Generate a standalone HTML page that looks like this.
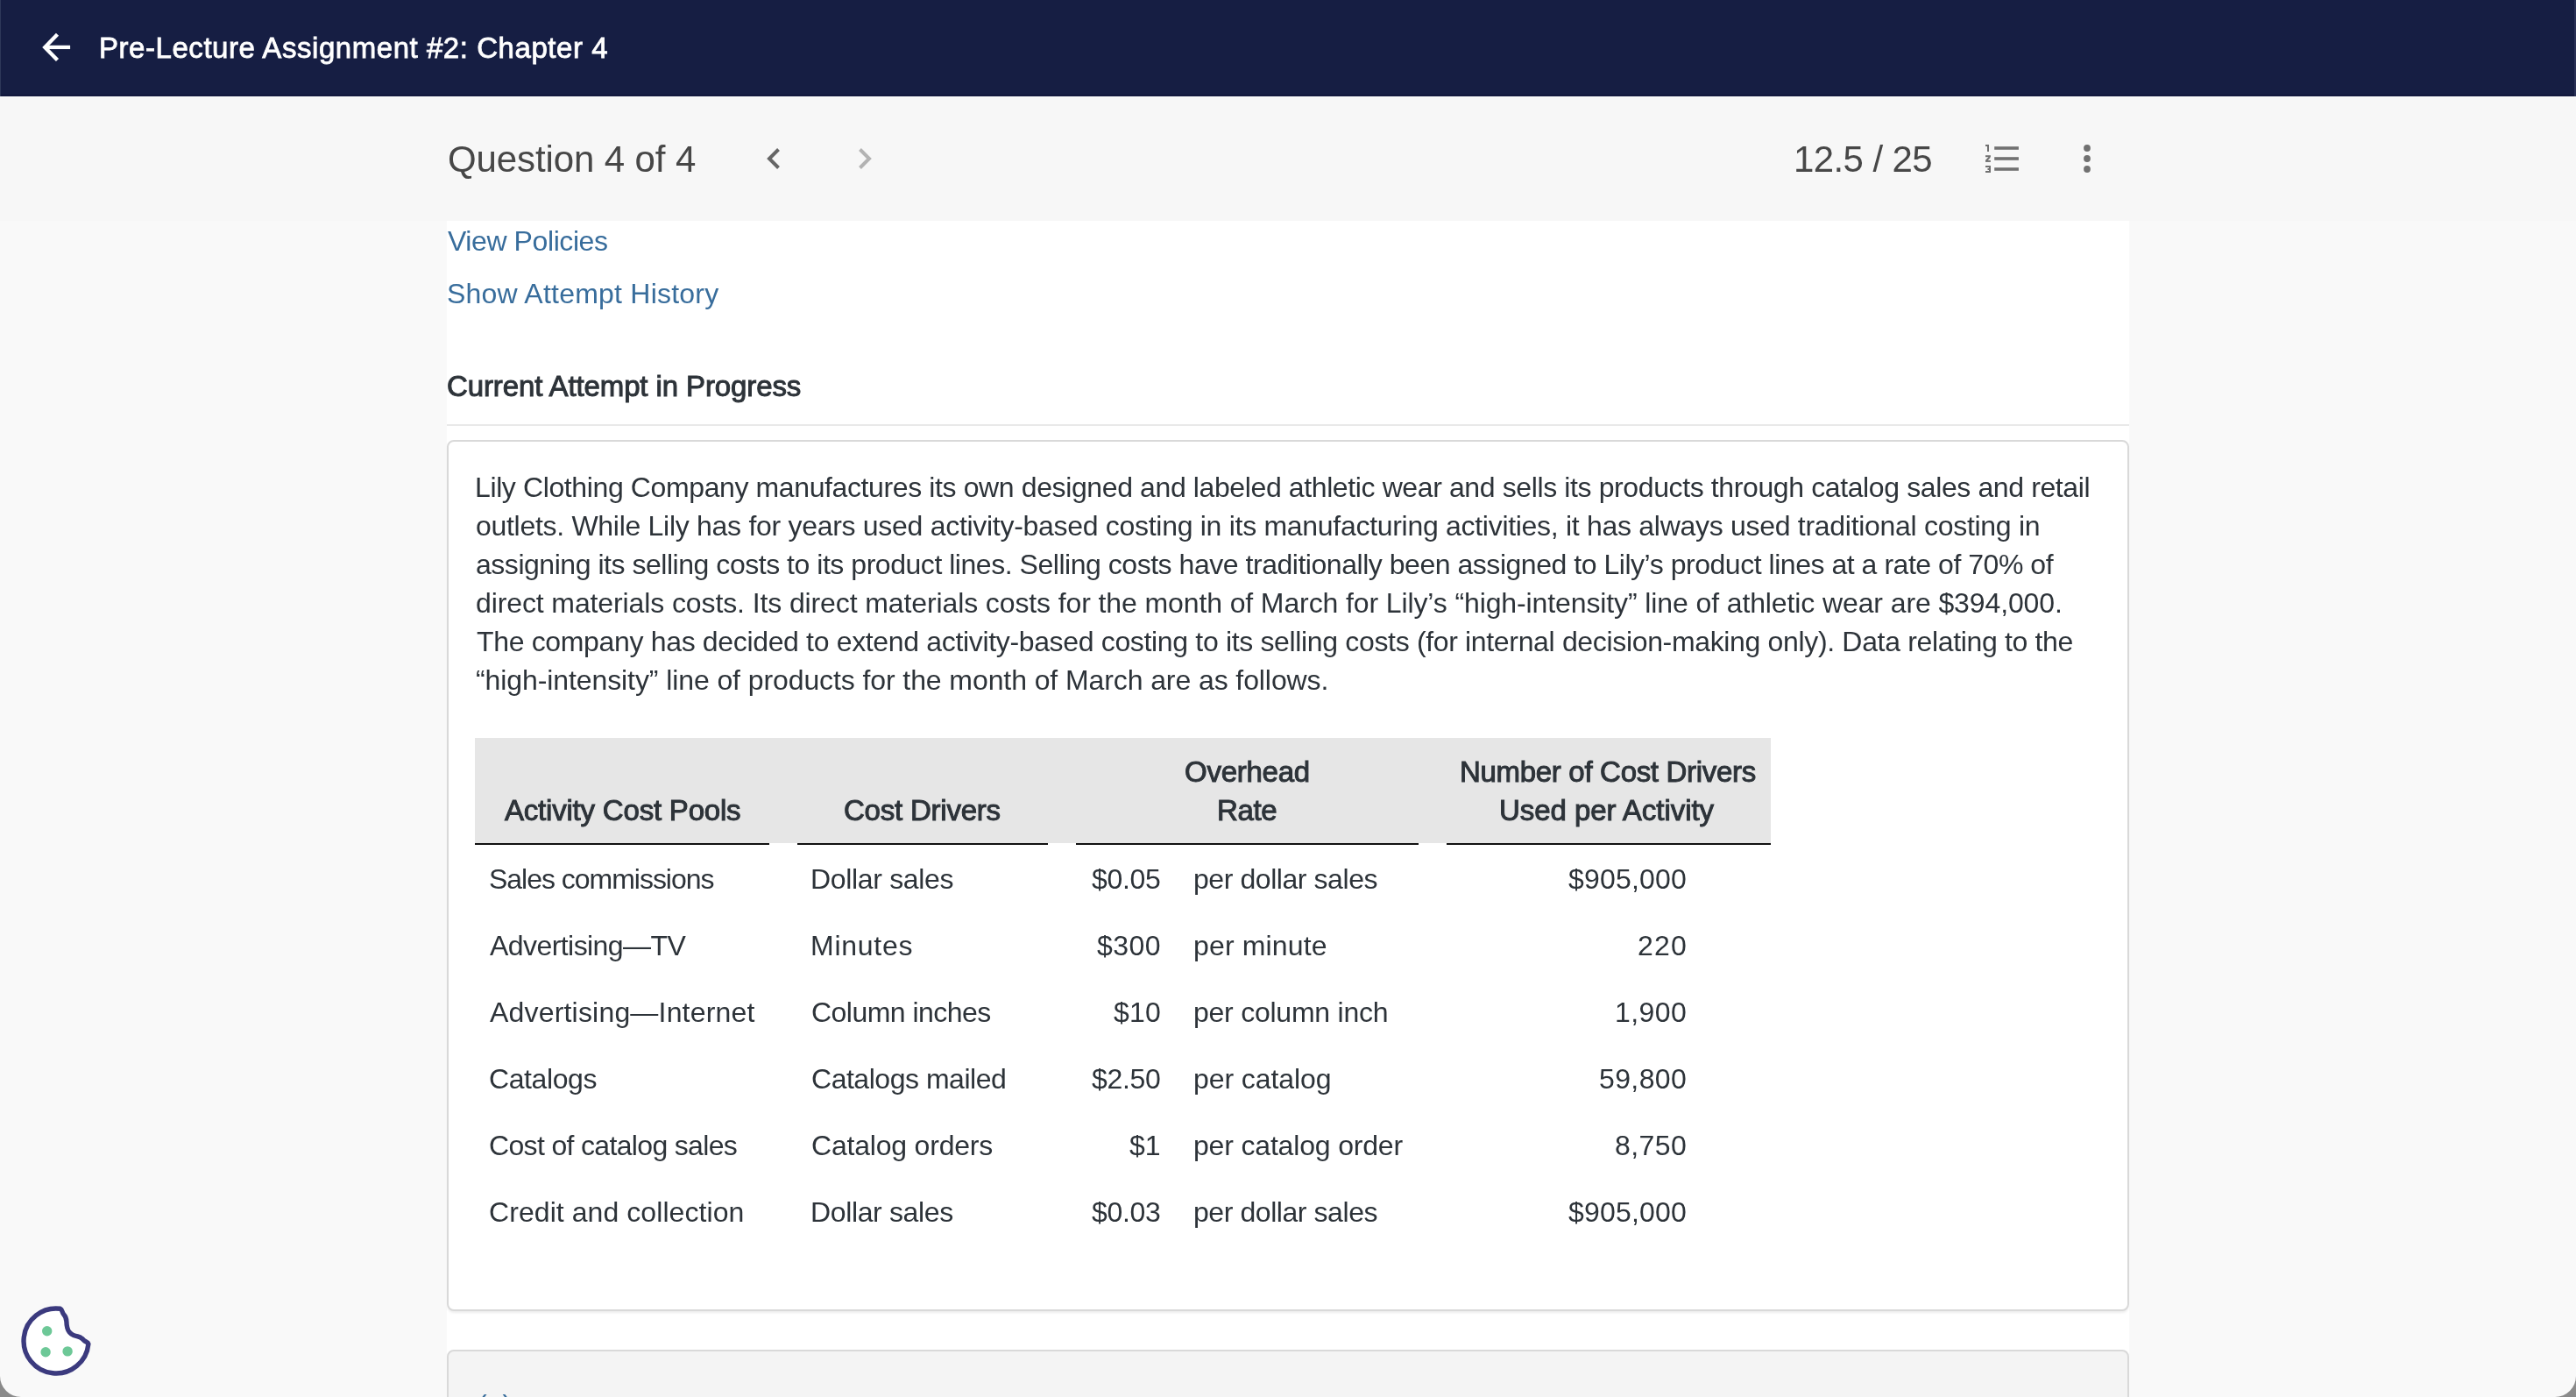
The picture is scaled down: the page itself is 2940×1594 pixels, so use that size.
<!DOCTYPE html>
<html><head><meta charset="utf-8"><title>Pre-Lecture Assignment #2: Chapter 4</title>
<style>
html,body{margin:0;padding:0;width:2940px;height:1594px;overflow:hidden;background:#f9f9f9;font-family:"Liberation Sans",sans-serif;position:relative}
.t{position:absolute;white-space:nowrap;line-height:1;will-change:transform}
.a{position:absolute}
</style></head><body>
<!-- top app bar -->
<div class="a" style="left:0;top:0;width:2940px;height:110px;background:#161e43"></div>
<div class="a" style="left:0;top:110px;width:2940px;height:142px;background:#f7f7f7"></div>
<div class="a" style="left:0;top:108px;width:2940px;height:1px;background:#10143a"></div>
<div class="a" style="left:0;top:110px;width:2940px;height:1px;background:#ffffff"></div>
<div class="a" style="left:0;top:0;width:1px;height:110px;background:#2e3858"></div>
<div class="a" style="left:2938px;top:0;width:2px;height:110px;background:#2a3156"></div>
<!-- white content column -->
<div class="a" style="left:510px;top:252px;width:1920px;height:1342px;background:#ffffff"></div>
<!-- hr -->
<div class="a" style="left:510px;top:484px;width:1920px;height:2px;background:#e9e9e9"></div>
<!-- question box -->
<div class="a" style="left:510px;top:502px;width:1920px;height:994px;box-sizing:border-box;border:2px solid #d9d9d9;border-radius:8px;background:#fff;box-shadow:0 3px 3px -1px rgba(0,0,0,0.08)"></div>
<!-- table header background -->
<div class="a" style="left:542px;top:842px;width:1479px;height:120px;background:#e6e6e6"></div>
<div class="a" style="left:542px;top:962px;width:336px;height:2px;background:#111"></div>
<div class="a" style="left:910px;top:962px;width:286px;height:2px;background:#111"></div>
<div class="a" style="left:1228px;top:962px;width:391px;height:2px;background:#111"></div>
<div class="a" style="left:1651px;top:962px;width:370px;height:2px;background:#111"></div>
<!-- bottom panel -->
<div class="a" style="left:510px;top:1540px;width:1920px;height:80px;box-sizing:border-box;border:2px solid #d9d9d9;border-radius:8px;background:#f4f4f4"></div>

<!-- icons -->
<svg class="a" style="left:0;top:0" width="2940" height="1594" viewBox="0 0 2940 1594">
  <!-- back arrow -->
  <path d="M65.5 39.3 L51.2 53.9 L65.5 68.6" fill="none" stroke="#fff" stroke-width="4.3" stroke-linejoin="miter"/>
  <path d="M51 53.9 H80.1" fill="none" stroke="#fff" stroke-width="4.3"/>
  <!-- chevrons -->
  <path d="M888.5 170.5 L878 181 L888.5 191.5" fill="none" stroke="#666" stroke-width="4"/>
  <path d="M981.5 170.5 L992 181 L981.5 191.5" fill="none" stroke="#b3b3b3" stroke-width="4"/>
  <!-- list icon -->
  <g fill="#717171">
    <rect x="2276.2" y="167.2" width="27.7" height="3.6"/>
    <rect x="2276.2" y="179.2" width="27.7" height="3.6"/>
    <rect x="2276.2" y="191.2" width="27.7" height="3.6"/>
    <rect x="2266" y="165" width="4" height="2"/>
    <rect x="2268" y="165" width="2" height="8"/>
    <rect x="2266" y="177.2" width="5.9" height="2"/>
    <rect x="2266" y="182.9" width="5.9" height="2"/>
    <rect x="2266" y="189" width="5.9" height="2"/>
    <rect x="2268.5" y="192" width="3.4" height="2"/>
    <rect x="2266" y="195" width="5.9" height="2"/>
    <rect x="2270" y="189" width="2" height="8"/>
  </g>
  <path d="M2271 179 L2266.8 183.5" stroke="#717171" stroke-width="2" fill="none"/>
  <!-- kebab -->
  <g fill="#717171">
    <circle cx="2382" cy="169" r="3.9"/>
    <circle cx="2382" cy="181" r="3.9"/>
    <circle cx="2382" cy="193" r="3.9"/>
  </g>
  <!-- cookie -->
  <path d="M68.7 1493.3 C71.5 1494.5 70.5 1497.5 72.8 1499.8 C75 1502 75.8 1503.5 75.9 1508 C76 1512.5 76.2 1516.5 79.2 1520 C82 1523.3 85 1524.5 89 1525 C93 1525.5 94 1528 96.5 1530 C98.3 1531.3 100.3 1531.3 100.9 1533.5 A37 37 0 1 1 68.7 1493.3 Z" fill="#fff" stroke="#3b3a7e" stroke-width="5.4" stroke-linejoin="round"/>
  <g fill="#6dc897">
    <circle cx="53.7" cy="1518.7" r="5.7"/>
    <circle cx="52.1" cy="1542.8" r="5.7"/>
    <circle cx="77.1" cy="1541.9" r="5.7"/>
  </g>
</svg>

<div class="t" style="left:112.5px;top:38.1px;font-size:33px;letter-spacing:0.549px;color:#ffffff;-webkit-text-stroke:0.8px #ffffff">Pre-Lecture Assignment #2: Chapter 4</div>
<div class="t" style="left:511.0px;top:161.4px;font-size:42px;letter-spacing:-0.107px;color:#474747">Question 4 of 4</div>
<div class="t" style="left:2046.5px;top:161.4px;font-size:42px;letter-spacing:-0.601px;color:#474747">12.5 / 25</div>
<div class="t" style="left:511.0px;top:258.9px;font-size:32px;letter-spacing:-0.411px;color:#386d9c">View Policies</div>
<div class="t" style="left:510.0px;top:318.9px;font-size:32px;letter-spacing:0.229px;color:#386d9c">Show Attempt History</div>
<div class="t" style="left:510.0px;top:424.1px;font-size:33px;letter-spacing:-0.111px;color:#2d3339;-webkit-text-stroke:1.0px #2d3339">Current Attempt in Progress</div>
<div class="t" style="left:542.0px;top:539.9px;font-size:32px;letter-spacing:-0.385px;color:#2d3339">Lily Clothing Company manufactures its own designed and labeled athletic wear and sells its products through catalog sales and retail</div>
<div class="t" style="left:543.0px;top:583.9px;font-size:32px;letter-spacing:-0.291px;color:#2d3339">outlets. While Lily has for years used activity-based costing in its manufacturing activities, it has always used traditional costing in</div>
<div class="t" style="left:543.0px;top:627.9px;font-size:32px;letter-spacing:-0.466px;color:#2d3339">assigning its selling costs to its product lines. Selling costs have traditionally been assigned to Lily’s product lines at a rate of 70% of</div>
<div class="t" style="left:543.0px;top:671.9px;font-size:32px;letter-spacing:-0.111px;color:#2d3339">direct materials costs. Its direct materials costs for the month of March for Lily’s “high-intensity” line of athletic wear are $394,000.</div>
<div class="t" style="left:544.0px;top:715.9px;font-size:32px;letter-spacing:-0.338px;color:#2d3339">The company has decided to extend activity-based costing to its selling costs (for internal decision-making only). Data relating to the</div>
<div class="t" style="left:543.0px;top:759.9px;font-size:32px;letter-spacing:-0.093px;color:#2d3339">“high-intensity” line of products for the month of March are as follows.</div>
<div class="t" style="left:575.5px;top:908.1px;font-size:33px;letter-spacing:-0.203px;color:#2d3339;-webkit-text-stroke:1.0px #2d3339">Activity Cost Pools</div>
<div class="t" style="left:962.7px;top:908.1px;font-size:33px;letter-spacing:-0.220px;color:#2d3339;-webkit-text-stroke:1.0px #2d3339">Cost Drivers</div>
<div class="t" style="left:1351.6px;top:864.1px;font-size:33px;letter-spacing:-0.253px;color:#2d3339;-webkit-text-stroke:1.0px #2d3339">Overhead</div>
<div class="t" style="left:1388.7px;top:908.1px;font-size:33px;letter-spacing:-0.351px;color:#2d3339;-webkit-text-stroke:1.0px #2d3339">Rate</div>
<div class="t" style="left:1666.0px;top:864.1px;font-size:33px;letter-spacing:-0.312px;color:#2d3339;-webkit-text-stroke:1.0px #2d3339">Number of Cost Drivers</div>
<div class="t" style="left:1710.6px;top:908.1px;font-size:33px;letter-spacing:-0.043px;color:#2d3339;-webkit-text-stroke:1.0px #2d3339">Used per Activity</div>
<div class="t" style="left:557.5px;top:986.9px;font-size:32px;letter-spacing:-1.022px;color:#2d3339">Sales commissions</div>
<div class="t" style="left:924.5px;top:986.9px;font-size:32px;letter-spacing:-0.334px;color:#2d3339">Dollar sales</div>
<div class="t" style="left:1245.8px;top:986.9px;font-size:32px;letter-spacing:-0.345px;color:#2d3339">$0.05</div>
<div class="t" style="left:1362.3px;top:986.9px;font-size:32px;letter-spacing:-0.433px;color:#2d3339">per dollar sales</div>
<div class="t" style="left:1790.0px;top:986.9px;font-size:32px;letter-spacing:0.190px;color:#2d3339">$905,000</div>
<div class="t" style="left:558.5px;top:1062.9px;font-size:32px;letter-spacing:-0.565px;color:#2d3339">Advertising—TV</div>
<div class="t" style="left:924.5px;top:1062.9px;font-size:32px;letter-spacing:0.742px;color:#2d3339">Minutes</div>
<div class="t" style="left:1252.0px;top:1062.9px;font-size:32px;letter-spacing:0.436px;color:#2d3339">$300</div>
<div class="t" style="left:1362.3px;top:1062.9px;font-size:32px;letter-spacing:0.145px;color:#2d3339">per minute</div>
<div class="t" style="left:1869.0px;top:1062.9px;font-size:32px;letter-spacing:1.203px;color:#2d3339">220</div>
<div class="t" style="left:558.5px;top:1138.9px;font-size:32px;letter-spacing:0.188px;color:#2d3339">Advertising—Internet</div>
<div class="t" style="left:925.5px;top:1138.9px;font-size:32px;letter-spacing:-0.538px;color:#2d3339">Column inches</div>
<div class="t" style="left:1270.6px;top:1138.9px;font-size:32px;letter-spacing:0.253px;color:#2d3339">$10</div>
<div class="t" style="left:1362.3px;top:1138.9px;font-size:32px;letter-spacing:-0.242px;color:#2d3339">per column inch</div>
<div class="t" style="left:1843.0px;top:1138.9px;font-size:32px;letter-spacing:0.430px;color:#2d3339">1,900</div>
<div class="t" style="left:557.5px;top:1214.9px;font-size:32px;letter-spacing:-0.400px;color:#2d3339">Catalogs</div>
<div class="t" style="left:925.5px;top:1214.9px;font-size:32px;letter-spacing:-0.475px;color:#2d3339">Catalogs mailed</div>
<div class="t" style="left:1245.8px;top:1214.9px;font-size:32px;letter-spacing:-0.345px;color:#2d3339">$2.50</div>
<div class="t" style="left:1362.3px;top:1214.9px;font-size:32px;letter-spacing:-0.083px;color:#2d3339">per catalog</div>
<div class="t" style="left:1825.0px;top:1214.9px;font-size:32px;letter-spacing:0.384px;color:#2d3339">59,800</div>
<div class="t" style="left:557.5px;top:1290.9px;font-size:32px;letter-spacing:-0.662px;color:#2d3339">Cost of catalog sales</div>
<div class="t" style="left:925.5px;top:1290.9px;font-size:32px;letter-spacing:-0.199px;color:#2d3339">Catalog orders</div>
<div class="t" style="left:1289.0px;top:1290.9px;font-size:32px;letter-spacing:-0.097px;color:#2d3339">$1</div>
<div class="t" style="left:1362.3px;top:1290.9px;font-size:32px;letter-spacing:-0.173px;color:#2d3339">per catalog order</div>
<div class="t" style="left:1843.0px;top:1290.9px;font-size:32px;letter-spacing:0.430px;color:#2d3339">8,750</div>
<div class="t" style="left:557.5px;top:1366.9px;font-size:32px;letter-spacing:0.068px;color:#2d3339">Credit and collection</div>
<div class="t" style="left:924.5px;top:1366.9px;font-size:32px;letter-spacing:-0.361px;color:#2d3339">Dollar sales</div>
<div class="t" style="left:1245.8px;top:1366.9px;font-size:32px;letter-spacing:-0.345px;color:#2d3339">$0.03</div>
<div class="t" style="left:1362.3px;top:1366.9px;font-size:32px;letter-spacing:-0.433px;color:#2d3339">per dollar sales</div>
<div class="t" style="left:1790.0px;top:1366.9px;font-size:32px;letter-spacing:0.190px;color:#2d3339">$905,000</div>
<div class="t" style="left:545.0px;top:1586.9px;font-size:32px;letter-spacing:0.000px;color:#386d9c">(a)</div>

<!-- window corners -->
<svg class="a" style="left:0;top:1570px" width="24" height="24" viewBox="0 0 24 24"><path d="M0 0 V24 H24 A24 24 0 0 1 0 0 Z" fill="#8a8a8a"/></svg>
<svg class="a" style="left:2916px;top:1570px" width="24" height="24" viewBox="0 0 24 24"><path d="M24 0 V24 H0 A24 24 0 0 0 24 0 Z" fill="#8a8a8a"/></svg>
</body></html>
